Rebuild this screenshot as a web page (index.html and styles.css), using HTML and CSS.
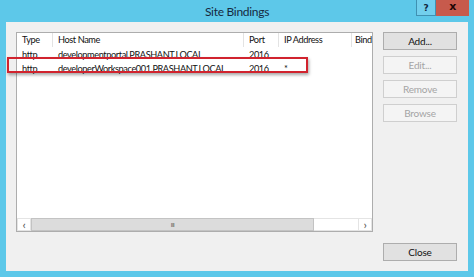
FILE: index.html
```html
<!DOCTYPE html>
<html lang="en">
<head>
    <meta charset="UTF-8">
    <title>Site Bindings</title>
    <link rel="stylesheet" href="styles.css">
</head>
<body>
    <div class="window">
        <!-- Title bar -->
        <div class="titlebar">
            <span class="title">Site Bindings</span>
            <div class="controls">
                <span class="help">?</span>
                <span class="close-x">x</span>
            </div>
        </div>

        <div class="content">
            <div class="main">
                <div class="list">
                    <div class="row head">
                        <span class="c-type">Type</span>
                        <span class="c-host">Host Name</span>
                        <span class="c-port">Port</span>
                        <span class="c-ip">IP Address</span>
                        <span class="c-bind">Bind</span>
                    </div>
                    <div class="row">
                        <span class="c-type">http</span>
                        <span class="c-host">developmentportal.PRASHANT.LOCAL</span>
                        <span class="c-port">2016</span>
                        <span class="c-ip"></span>
                        <span class="c-bind"></span>
                    </div>
                    <div class="row">
                        <span class="c-type">http</span>
                        <span class="c-host">developerWorkspace001.PRASHANT.LOCAL</span>
                        <span class="c-port">2016</span>
                        <span class="c-ip">*</span>
                        <span class="c-bind"></span>
                    </div>
                    <div class="spacer"></div>
                    <div class="hscroll">
                        <span class="arrow">&lsaquo;</span>
                        <span class="thumb">III</span>
                        <span class="track"></span>
                        <span class="arrow">&rsaquo;</span>
                    </div>
                    <!-- highlight box drawn over the second row -->
                    <div class="highlight"></div>
                </div>

                <div class="side">
                    <button class="btn">Add...</button>
                    <button class="btn" disabled>Edit...</button>
                    <button class="btn" disabled>Remove</button>
                    <button class="btn" disabled>Browse</button>
                </div>
            </div>

            <div class="footer">
                <button class="btn">Close</button>
            </div>
        </div>
    </div>
</body>
</html>
```

FILE: styles.css
```css
* {
    margin: 0;
    padding: 0;
    box-sizing: border-box;
}

body {
    width: 474px;
    height: 277px;
    overflow: hidden;
    font-family: Lato, "Noto Sans", sans-serif;
    font-size: 9.2px;
    letter-spacing: -0.4px;
    color: #111;
}

.window {
    width: 474px;
    height: 277px;
    background: #5dc8e9;
    display: flex;
    flex-direction: column;
    padding: 0 6px 6px 6px;
}

.titlebar {
    height: 22px;
    position: relative;
    display: flex;
    justify-content: center;
    align-items: center;
}

.title {
    font-size: 12px;
    letter-spacing: -0.3px;
    color: #16283f;
    padding-top: 1px;
}

.controls {
    position: absolute;
    right: -1px;
    top: 0;
    display: flex;
}

.help {
    width: 20px;
    height: 16px;
    background: #72cfed;
    border: 1px solid #3f91b2;
    border-top: none;
    color: #10283f;
    font-family: "DejaVu Sans", sans-serif;
    font-weight: bold;
    font-size: 9px;
    display: flex;
    justify-content: center;
    align-items: center;
}

.close-x {
    width: 33px;
    height: 16px;
    background: #c75a4c;
    color: #1e0606;
    font-family: "DejaVu Sans", sans-serif;
    font-weight: bold;
    font-size: 11px;
    line-height: 14px;
    text-align: center;
}

.content {
    flex: 1;
    background: #f0f0f0;
    padding: 10px 11px 10px 10px;
    display: flex;
    flex-direction: column;
}

.main {
    display: flex;
    gap: 10px;
}

.list {
    position: relative;
    width: 357px;
    height: 200px;
    background: #fff;
    border: 1px solid #adadad;
    display: flex;
    flex-direction: column;
}

.row {
    display: flex;
    height: 14px;
    align-items: center;
    white-space: nowrap;
}

.row span {
    padding-left: 5px;
    overflow: hidden;
}

.head span {
    border-right: 1px solid #e3e3e3;
    height: 14px;
    line-height: 14px;
}

.c-type { width: 36px; }
.c-host { width: 191px; }
.c-port { width: 35px; }
.c-ip { width: 73px; }
.c-bind { flex: 1; }

.head .c-bind {
    border-right: none;
    padding-left: 3px;
}

.spacer {
    flex: 1;
}

.hscroll {
    height: 13px;
    display: flex;
}

.hscroll .arrow {
    width: 14px;
    font-size: 12px;
    line-height: 11px;
    color: #505050;
    text-align: center;
    border: 1px solid #e4e4e4;
}

.thumb {
    width: 283px;
    background: #dcdcdc;
    border: 1px solid #c3c3c3;
    font-size: 6px;
    line-height: 11px;
    text-align: center;
    color: #555;
    letter-spacing: -0.5px;
}

.track {
    flex: 1;
    border-top: 1px solid #e4e4e4;
    border-bottom: 1px solid #e4e4e4;
}

.highlight {
    position: absolute;
    left: -10px;
    top: 24px;
    width: 301px;
    height: 16px;
    border: 2px solid #d1232e;
    box-shadow: 1px 2px 3px rgba(0, 0, 0, 0.35);
}

.side {
    width: 74px;
    display: flex;
    flex-direction: column;
    gap: 6px;
}

.btn {
    height: 18px;
    width: 74px;
    font-family: inherit;
    font-size: 10px;
    letter-spacing: -0.2px;
    color: #111;
    background: #e1e1e1;
    border: 1px solid #adadad;
}

.btn:disabled {
    background: #f4f4f4;
    border-color: #cfcfcf;
    color: #a4a4a4;
}

.footer {
    margin-top: auto;
    display: flex;
    justify-content: flex-end;
}
```
